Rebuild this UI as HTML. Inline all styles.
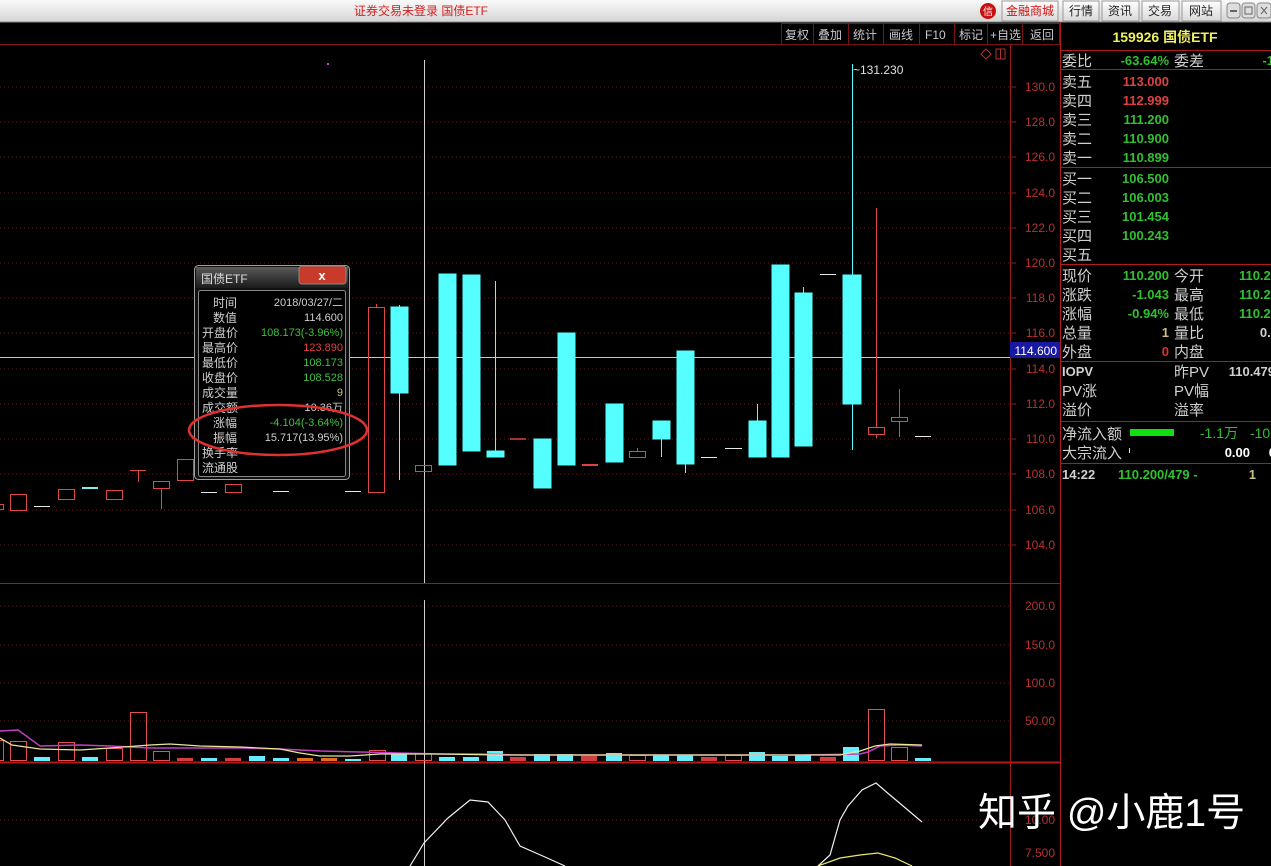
<!DOCTYPE html>
<html><head><meta charset="utf-8"><style>
html,body{margin:0;padding:0;background:#000;width:1271px;height:866px;overflow:hidden}
svg{display:block}
text{font-family:"Liberation Sans","Noto Sans CJK SC",sans-serif}
</style></head><body>
<svg width="1271" height="866" viewBox="0 0 1271 866" xmlns="http://www.w3.org/2000/svg">
<defs>
<linearGradient id="tb" x1="0" y1="0" x2="0" y2="1"><stop offset="0" stop-color="#fafafa"/><stop offset="1" stop-color="#d4d4d4"/></linearGradient>
<linearGradient id="bt" x1="0" y1="0" x2="0" y2="1"><stop offset="0" stop-color="#ffffff"/><stop offset="1" stop-color="#d8d8d8"/></linearGradient>
<linearGradient id="pt" x1="0" y1="0" x2="0" y2="1"><stop offset="0" stop-color="#5a5a5a"/><stop offset="1" stop-color="#1a1a1a"/></linearGradient>
</defs>
<rect width="1271" height="866" fill="#000"/>
<!-- title bar -->
<rect x="0" y="0" width="1271" height="22" fill="url(#tb)"/>
<line x1="0" y1="22" x2="1271" y2="22" stroke="#888"/>
<text x="354" y="15" font-size="12" fill="#d42020">证券交易未登录  国债ETF</text>
<circle cx="988" cy="11" r="8" fill="#c81010"/><text x="983" y="15" font-size="10" fill="#fff">信</text>
<g font-size="12">
<rect x="1002" y="1" width="56" height="20" fill="url(#bt)" stroke="#999"/><text x="1006" y="15" fill="#d01010">金融商城</text>
<rect x="1063" y="1" width="36" height="20" fill="url(#bt)" stroke="#999"/><text x="1069" y="15" fill="#222">行情</text>
<rect x="1102" y="1" width="37" height="20" fill="url(#bt)" stroke="#999"/><text x="1108" y="15" fill="#222">资讯</text>
<rect x="1142" y="1" width="37" height="20" fill="url(#bt)" stroke="#999"/><text x="1148" y="15" fill="#222">交易</text>
<rect x="1182" y="1" width="39" height="20" fill="url(#bt)" stroke="#999"/><text x="1189" y="15" fill="#222">网站</text>
</g>
<rect x="1227" y="3" width="13" height="15" rx="3" fill="#ddd" stroke="#888"/><rect x="1230" y="10" width="7" height="2" fill="#666"/>
<rect x="1242" y="3" width="13" height="15" rx="3" fill="#ddd" stroke="#888"/><rect x="1245" y="7" width="7" height="7" fill="none" stroke="#666"/>
<rect x="1257" y="3" width="14" height="15" rx="3" fill="#ddd" stroke="#888"/><path d="M1261 7l6 7M1267 7l-6 7" stroke="#666"/>
<!-- toolbar -->
<line x1="0" y1="44.5" x2="1060" y2="44.5" stroke="#8a1515"/>
<g stroke="#7a1515" fill="none">
<rect x="781.5" y="23.5" width="32" height="21"/><rect x="813.5" y="23.5" width="35" height="21"/><rect x="848.5" y="23.5" width="35" height="21"/><rect x="883.5" y="23.5" width="36" height="21"/><rect x="919.5" y="23.5" width="35" height="21"/><rect x="954.5" y="23.5" width="33" height="21"/><rect x="987.5" y="23.5" width="35" height="21"/><rect x="1022.5" y="23.5" width="37" height="21"/>
</g>
<g font-size="12" fill="#c8c8c8">
<text x="785" y="39">复权</text><text x="818" y="39">叠加</text><text x="853" y="39">统计</text><text x="889" y="39">画线</text><text x="925" y="39">F10</text><text x="959" y="39">标记</text><text x="990" y="39">+自选</text><text x="1030" y="39">返回</text>
</g>
<!-- frame lines -->
<line x1="1010.5" y1="45" x2="1010.5" y2="866" stroke="#9a1a1a"/>
<line x1="1060.5" y1="22" x2="1060.5" y2="866" stroke="#b01a1a"/>
<line x1="0" y1="583.5" x2="1060" y2="583.5" stroke="#9a1a1a"/>
<line x1="0" y1="762.5" x2="1060" y2="762.5" stroke="#b01a1a" stroke-width="2"/>
<!-- price grid -->
<g stroke="#6a1a1a" stroke-dasharray="1 3">
<line x1="0" y1="87" x2="1010" y2="87"/><line x1="0" y1="122" x2="1010" y2="122"/><line x1="0" y1="157" x2="1010" y2="157"/><line x1="0" y1="193" x2="1010" y2="193"/><line x1="0" y1="228" x2="1010" y2="228"/><line x1="0" y1="263" x2="1010" y2="263"/><line x1="0" y1="298" x2="1010" y2="298"/><line x1="0" y1="333" x2="1010" y2="333"/><line x1="0" y1="369" x2="1010" y2="369"/><line x1="0" y1="404" x2="1010" y2="404"/><line x1="0" y1="439" x2="1010" y2="439"/><line x1="0" y1="474" x2="1010" y2="474"/><line x1="0" y1="510" x2="1010" y2="510"/><line x1="0" y1="545" x2="1010" y2="545"/>
<line x1="0" y1="606" x2="1010" y2="606"/><line x1="0" y1="645" x2="1010" y2="645"/><line x1="0" y1="683" x2="1010" y2="683"/><line x1="0" y1="721" x2="1010" y2="721"/><line x1="0" y1="820" x2="1010" y2="820"/>
</g>
<g font-size="12" fill="#b83030" text-anchor="end">
<text x="1055" y="91">130.0</text><text x="1055" y="126">128.0</text><text x="1055" y="161">126.0</text><text x="1055" y="197">124.0</text><text x="1055" y="232">122.0</text><text x="1055" y="267">120.0</text><text x="1055" y="302">118.0</text><text x="1055" y="337">116.0</text><text x="1055" y="373">114.0</text><text x="1055" y="408">112.0</text><text x="1055" y="443">110.0</text><text x="1055" y="478">108.0</text><text x="1055" y="514">106.0</text><text x="1055" y="549">104.0</text>
<text x="1055" y="610">200.0</text><text x="1055" y="649">150.0</text><text x="1055" y="687">100.0</text><text x="1055" y="725">50.00</text><text x="1055" y="824">10.00</text><text x="1055" y="857">7.500</text>
</g>
<g stroke="#9a1a1a">
<line x1="1010" y1="87" x2="1016" y2="87"/><line x1="1010" y1="122" x2="1016" y2="122"/><line x1="1010" y1="157" x2="1016" y2="157"/><line x1="1010" y1="193" x2="1016" y2="193"/><line x1="1010" y1="228" x2="1016" y2="228"/><line x1="1010" y1="263" x2="1016" y2="263"/><line x1="1010" y1="298" x2="1016" y2="298"/><line x1="1010" y1="333" x2="1016" y2="333"/><line x1="1010" y1="369" x2="1016" y2="369"/><line x1="1010" y1="404" x2="1016" y2="404"/><line x1="1010" y1="439" x2="1016" y2="439"/><line x1="1010" y1="474" x2="1016" y2="474"/><line x1="1010" y1="510" x2="1016" y2="510"/><line x1="1010" y1="545" x2="1016" y2="545"/>
</g>
<rect x="1010" y="342" width="50" height="16" fill="#1818a0"/>
<text x="1057" y="355" font-size="12" fill="#fff" text-anchor="end">114.600</text>
<path d="M981 54l5-5 5 5-5 5z" fill="none" stroke="#b03030"/><rect x="996" y="49" width="9" height="10" fill="none" stroke="#b03030"/><line x1="1000.5" y1="49" x2="1000.5" y2="59" stroke="#b03030"/>
<rect x="327" y="63" width="2" height="2" fill="#d040d0"/>
<!-- crosshair -->
<line x1="424.5" y1="60" x2="424.5" y2="583" stroke="#d0d0d0"/>
<line x1="424.5" y1="600" x2="424.5" y2="866" stroke="#d0d0d0"/>
<line x1="0" y1="357.5" x2="1010" y2="357.5" stroke="#c8c8c8"/>
<!-- candles red hollow -->
<g fill="none" stroke="#e04848">
<rect x="-6.5" y="504.5" width="10" height="5"/>
<rect x="10.5" y="494.5" width="16" height="16"/>
<rect x="58.5" y="489.5" width="16" height="10"/>
<rect x="106.5" y="490.5" width="16" height="9"/>
<line x1="130" y1="470.5" x2="146" y2="470.5"/><line x1="138.5" y1="470" x2="138.5" y2="482"/>
<rect x="153.5" y="481.5" width="16" height="7"/><line x1="161.5" y1="488" x2="161.5" y2="509"/>
<rect x="177.5" y="459.5" width="16" height="21"/>
<rect x="225.5" y="484.5" width="16" height="8"/>
<rect x="368.5" y="307.5" width="16" height="185"/><line x1="376.5" y1="304" x2="376.5" y2="307"/>
<rect x="415.5" y="465.5" width="16" height="6"/>
<rect x="629.5" y="451.5" width="16" height="6"/><line x1="637.5" y1="448" x2="637.5" y2="451"/>
<rect x="868.5" y="427.5" width="16" height="7"/><line x1="876.5" y1="208" x2="876.5" y2="427"/><line x1="876.5" y1="435" x2="876.5" y2="438"/>
<rect x="891.5" y="417.5" width="16" height="4"/><line x1="899.5" y1="389" x2="899.5" y2="417"/><line x1="899.5" y1="422" x2="899.5" y2="437"/>
</g>
<g stroke="#e04040" stroke-width="2">
<line x1="510" y1="439" x2="526" y2="439" stroke-width="1.5"/><line x1="582" y1="465" x2="598" y2="465"/>
</g>
<g stroke="#e8e8e8">
<line x1="34" y1="506.5" x2="50" y2="506.5"/><line x1="201" y1="492.5" x2="217" y2="492.5"/><line x1="273" y1="491.5" x2="289" y2="491.5"/><line x1="345" y1="491.5" x2="361" y2="491.5"/><line x1="701" y1="457.5" x2="717" y2="457.5"/><line x1="725" y1="448.5" x2="742" y2="448.5"/><line x1="820" y1="274.5" x2="836" y2="274.5"/><line x1="915" y1="436.5" x2="931" y2="436.5"/>
</g>
<line x1="82" y1="488" x2="98" y2="488" stroke="#80f0f0" stroke-width="2"/>
<!-- cyan candles -->
<g fill="#5ff" stroke="#5ff">
<line x1="399.5" y1="305" x2="399.5" y2="480"/><rect x="391" y="307" width="17" height="86"/>
<rect x="439" y="274" width="17" height="191"/>
<rect x="463" y="275" width="17" height="176"/>
<line x1="495.5" y1="281" x2="495.5" y2="451"/><rect x="487" y="451" width="17" height="6"/>
<rect x="534" y="439" width="17" height="49"/>
<rect x="558" y="333" width="17" height="132"/>
<rect x="606" y="404" width="17" height="58"/>
<line x1="661.5" y1="438" x2="661.5" y2="457"/><rect x="653" y="421" width="17" height="18"/>
<line x1="685.5" y1="464" x2="685.5" y2="473"/><rect x="677" y="351" width="17" height="113"/>
<line x1="757.5" y1="404" x2="757.5" y2="421"/><rect x="749" y="421" width="17" height="36"/>
<rect x="772" y="265" width="17" height="192"/>
<line x1="803.5" y1="287" x2="803.5" y2="293"/><rect x="795" y="293" width="17" height="153"/>
<line x1="852.5" y1="64" x2="852.5" y2="450"/><rect x="843" y="275" width="18" height="129"/>
</g>
<text x="853" y="74" font-size="12" fill="#e0e0e0">~131.230</text>
<!-- volume bars -->
<g fill="none" stroke="#e05050">
<rect x="-6.5" y="740.5" width="10" height="20"/><rect x="10.5" y="741.5" width="16" height="19"/><rect x="58.5" y="742.5" width="16" height="18"/><rect x="106.5" y="748.5" width="16" height="12"/><rect x="130.5" y="712.5" width="16" height="48"/><rect x="153.5" y="751.5" width="16" height="9"/><rect x="369.5" y="750.5" width="16" height="10"/><rect x="415.5" y="753.5" width="16" height="7"/><rect x="629.5" y="755.5" width="16" height="5"/><rect x="725.5" y="755.5" width="16" height="5"/><rect x="868.5" y="709.5" width="16" height="51"/><rect x="891.5" y="747.5" width="16" height="13"/>
</g>
<g fill="#d04040"><rect x="177" y="758" width="16" height="3"/><rect x="225" y="758" width="16" height="3"/><rect x="510" y="757" width="16" height="4"/><rect x="581" y="756" width="16" height="5"/><rect x="701" y="757" width="16" height="4"/><rect x="820" y="757" width="16" height="4"/></g>
<g fill="#e07020"><rect x="297" y="758" width="16" height="3"/><rect x="321" y="758" width="16" height="3"/></g>
<g fill="#6ef"><rect x="34" y="757" width="16" height="4"/><rect x="82" y="757" width="16" height="4"/><rect x="201" y="758" width="16" height="3"/><rect x="249" y="756" width="16" height="5"/><rect x="273" y="758" width="16" height="3"/><rect x="345" y="759" width="16" height="2"/><rect x="391" y="754" width="16" height="7"/><rect x="439" y="757" width="16" height="4"/><rect x="463" y="757" width="16" height="4"/><rect x="487" y="751" width="16" height="10"/><rect x="534" y="754" width="16" height="7"/><rect x="557" y="754" width="16" height="7"/><rect x="606" y="753" width="16" height="8"/><rect x="653" y="755" width="16" height="6"/><rect x="677" y="755" width="16" height="6"/><rect x="749" y="752" width="16" height="9"/><rect x="772" y="756" width="16" height="5"/><rect x="795" y="755" width="16" height="6"/><rect x="843" y="747" width="16" height="14"/><rect x="915" y="758" width="16" height="3"/></g>
<polyline fill="none" stroke="#c040c0" stroke-width="1.5" points="0,731 18,730 40,746 80,745 110,746 130,747 150,748 200,748 240,748 280,749 320,751 360,752 400,753 440,754 480,754 520,755 600,755 700,755 800,755 860,754 868,752 880,746 900,745 922,746"/>
<polyline fill="none" stroke="#e8e898" stroke-width="1.2" points="0,738 12,745 40,749 80,750 110,748 150,745 170,744 200,746 240,747 280,749 300,753 320,756 350,756 380,754 400,754 440,754 500,755 560,755 700,755 800,755 840,755 860,751 875,746 890,744 922,745"/>
<!-- bottom indicator -->
<polyline fill="none" stroke="#f0f0f0" stroke-width="1.2" points="410,866 424,843 448,818 470,800 488,802 505,820 520,846 545,857 565,866"/>
<polyline fill="none" stroke="#f0f0f0" stroke-width="1.2" points="818,866 830,855 840,820 848,806 862,790 876,783 890,795 922,822"/>
<polyline fill="none" stroke="#e8e870" stroke-width="1.2" points="818,866 840,858 860,855 878,853 895,858 912,866"/>
<!-- popup -->
<rect x="194.5" y="265.5" width="155" height="214" rx="4" fill="#101010" stroke="#a0a0a0"/>
<rect x="196" y="267" width="152" height="21" fill="url(#pt)"/>
<text x="201" y="283" font-size="12" fill="#ddd">国债ETF</text>
<rect x="299" y="266" width="47" height="18" rx="3" fill="#c83a2a" stroke="#888"/>
<text x="322" y="280" font-size="13" fill="#fff" text-anchor="middle" font-weight="bold">x</text>
<rect x="198.5" y="290.5" width="147" height="186" rx="2" fill="#000" stroke="#888"/>
<g font-size="12" fill="#d0d0d0">
<text x="213" y="307">时间</text><text x="213" y="322">数值</text><text x="202" y="337">开盘价</text><text x="202" y="352">最高价</text><text x="202" y="367">最低价</text><text x="202" y="382">收盘价</text><text x="202" y="397">成交量</text><text x="202" y="412">成交额</text><text x="213" y="427">涨幅</text><text x="213" y="442">振幅</text><text x="202" y="457">换手率</text><text x="202" y="472">流通股</text>
</g>
<g font-size="11" text-anchor="end" font-family="Liberation Mono, monospace">
<text x="343" y="306" fill="#d0d0d0">2018/03/27/二</text><text x="343" y="321" fill="#d0d0d0">114.600</text><text x="343" y="336" fill="#40c040">108.173(-3.96%)</text><text x="343" y="351" fill="#e04040">123.890</text><text x="343" y="366" fill="#40c040">108.173</text><text x="343" y="381" fill="#40c040">108.528</text><text x="343" y="396" fill="#c8c080">9</text><text x="343" y="411" fill="#d0d0d0">10.36万</text><text x="343" y="426" fill="#40c040">-4.104(-3.64%)</text><text x="343" y="441" fill="#d0d0d0">15.717(13.95%)</text>
</g>
<ellipse cx="278" cy="430" rx="89" ry="25" fill="none" stroke="#e03030" stroke-width="2.5"/>
<!-- right panel -->
<text x="1165" y="42" font-size="14" fill="#f0f060" text-anchor="middle" font-weight="bold">159926 国债ETF</text>
<g stroke="#b01a1a">
<line x1="1060" y1="50.5" x2="1271" y2="50.5"/><line x1="1060" y1="69.5" x2="1271" y2="69.5"/><line x1="1060" y1="167.5" x2="1271" y2="167.5"/><line x1="1060" y1="264.5" x2="1271" y2="264.5"/><line x1="1060" y1="361.5" x2="1271" y2="361.5"/><line x1="1060" y1="421.5" x2="1271" y2="421.5"/><line x1="1060" y1="463.5" x2="1271" y2="463.5"/>
</g>
<g font-size="15" fill="#d0d0d0">
<text x="1062" y="66">委比</text><text x="1174" y="66">委差</text>
<text x="1062" y="87">卖五</text><text x="1062" y="106">卖四</text><text x="1062" y="125">卖三</text><text x="1062" y="144">卖二</text><text x="1062" y="163">卖一</text>
<text x="1062" y="184">买一</text><text x="1062" y="203">买二</text><text x="1062" y="222">买三</text><text x="1062" y="241">买四</text><text x="1062" y="260">买五</text>
<text x="1062" y="281">现价</text><text x="1062" y="300">涨跌</text><text x="1062" y="319">涨幅</text><text x="1062" y="338">总量</text><text x="1062" y="357">外盘</text>
<text x="1174" y="281">今开</text><text x="1174" y="300">最高</text><text x="1174" y="319">最低</text><text x="1174" y="338">量比</text><text x="1174" y="357">内盘</text>
<text x="1174" y="377">昨PV</text><text x="1062" y="396">PV涨</text><text x="1174" y="396">PV幅</text><text x="1062" y="415">溢价</text><text x="1174" y="415">溢率</text>
<text x="1062" y="439">净流入额</text><text x="1062" y="458">大宗流入</text>
</g>
<g font-size="13" font-weight="bold">
<text x="1062" y="376" fill="#d0d0d0">IOPV</text>
<text x="1062" y="479" fill="#d0d0d0">14:22</text>
<text x="1118" y="479" fill="#30c030">110.200/479 -</text>
<text x="1256" y="479" fill="#c8c080" text-anchor="end">1</text>
</g>
<g font-size="13" font-weight="bold" text-anchor="end" fill="#30c030">
<text x="1169" y="65">-63.64%</text><text x="1274" y="65">-1</text>
<text x="1169" y="86" fill="#e04040">113.000</text><text x="1169" y="105" fill="#e04040">112.999</text><text x="1169" y="124">111.200</text><text x="1169" y="143">110.900</text><text x="1169" y="162">110.899</text>
<text x="1169" y="183">106.500</text><text x="1169" y="202">106.003</text><text x="1169" y="221">101.454</text><text x="1169" y="240">100.243</text>
<text x="1169" y="280">110.200</text><text x="1169" y="299">-1.043</text><text x="1169" y="318">-0.94%</text><text x="1169" y="337" fill="#c8c080">1</text><text x="1169" y="356" fill="#e03030">0</text>
<text x="1278" y="280">110.20</text><text x="1278" y="299">110.20</text><text x="1278" y="318">110.20</text><text x="1278" y="337" fill="#d0d0d0">0.0</text>
<text x="1275" y="376" fill="#d0d0d0">110.479</text>
<text x="1238" y="438" font-weight="normal" font-size="14">-1.1万</text><text x="1278" y="438" font-weight="normal" font-size="14">-100</text>
<text x="1250" y="457" fill="#fff">0.00</text><text x="1276" y="457" fill="#fff">0</text>
</g>
<rect x="1130" y="429" width="44" height="7" fill="#10e010"/>
<rect x="1129" y="448" width="1" height="5" fill="#ddd"/>
<!-- watermark -->
<text x="978" y="826" font-size="39" fill="#fff" font-family="'Noto Sans CJK SC',sans-serif">知乎 @小鹿1号</text>
</svg>
</body></html>
